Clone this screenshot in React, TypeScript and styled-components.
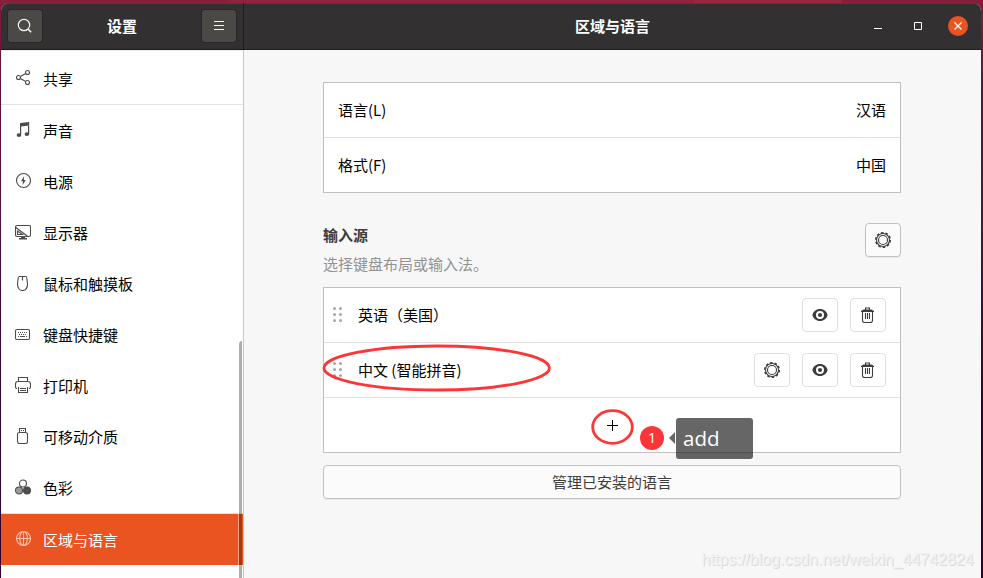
import React from "react";
import styled, { createGlobalStyle, css } from "styled-components";

const GlobalStyle = createGlobalStyle`
  * { box-sizing: border-box; }
  body {
    margin: 0;
    overflow: hidden;
    background: #3c0834;
    font-family: "Noto Sans CJK SC", "Noto Sans", sans-serif;
    font-size: 15px;
    line-height: 22px;
    color: #000;
  }
`;

const Desktop = styled.div`
  position: relative;
  width: 983px;
  height: 578px;
  padding: 3px 2px 0 1px;
  overflow: hidden;
  background:
    linear-gradient(90deg, #86203a 0 227px, #8f233d 227px 694px, #9a2740 694px 842px, #861d3a 842px) 0 0 / 100% 4px no-repeat,
    linear-gradient(180deg, #861b3b 0, #5d1238 90px, #54103c 220px, #350430 400px, #300030 578px);
`;

const Window = styled.div`
  display: flex;
  flex-direction: column;
  height: 575px;
  border-radius: 8px 8px 0 0;
  overflow: hidden;
  background: #f7f7f7;
`;

const HeaderBar = styled.header`
  display: flex;
  flex: none;
  height: 47px;
  background: #323030;
  border-bottom: 1px solid #1d1c1c;
  box-shadow: inset 0 1px #434141;
  color: #fff;
`;

const HeaderSide = styled.div`
  display: flex;
  align-items: center;
  justify-content: space-between;
  width: 243px;
  padding: 0 7px;
  border-right: 1px solid #1f1e1e;
`;

const HeaderMain = styled.div`
  display: grid;
  grid-template-columns: 1fr auto 1fr;
  align-items: center;
  flex: 1;
`;

const Title = styled.h1`
  margin: 0;
  grid-column: 2;
  font-size: 15px;
  line-height: 22px;
  font-weight: 700;
  padding-bottom: 1px;
`;

const HeaderButton = styled.button`
  display: grid;
  place-items: center;
  width: 34px;
  height: 32px;
  padding: 0;
  border: 0;
  border-radius: 3px;
  background: #4a4946;
  box-shadow: 0 0 0 1px #292727;
  color: #f4f4f4;
`;

const WindowControls = styled.div`
  display: flex;
  align-items: center;
  justify-content: flex-end;
  gap: 20px;
  padding-right: 13px;
`;

const Control = styled.span<{ $close?: boolean }>`
  display: grid;
  place-items: center;
  width: 20px;
  height: 20px;
  border-radius: 50%;
  ${(p) => p.$close && css`background: #e95420;`}
`;

const Body = styled.div`
  display: flex;
  flex: 1;
  min-height: 0;
`;

const Sidebar = styled.nav`
  position: relative;
  width: 243px;
  padding-top: 3px;
  flex: none;
  background: #fff;
  border-right: 1px solid #c9c7c6;
  box-shadow: inset 0 1px #ececec;
`;

const NavRow = styled.div<{ $selected?: boolean; $divided?: boolean }>`
  display: flex;
  align-items: center;
  gap: 12px;
  height: ${(p) => (p.$divided ? 52 : 51)}px;
  padding-left: 13px;
  ${(p) => p.$divided && css`border-bottom: 1px solid #e3e3e3;`}
  background: ${(p) => (p.$selected ? "#e95420" : "transparent")};
  color: ${(p) => (p.$selected ? "#fff" : "#000")};

  svg {
    color: ${(p) => (p.$selected ? "#f8c1ab" : "#4b4b4b")};
    margin-top: -2px;
  }
`;

const Scrollbar = styled.div`
  position: absolute;
  top: 291px;
  right: 1px;
  width: 4px;
  height: 240px;
  border-left: 1px solid rgba(255, 255, 255, 0.45);
  border-radius: 3px 0 0 0;
  background: rgba(0, 0, 0, 0.31);
  background-clip: padding-box;
`;

const Content = styled.main`
  display: flex;
  flex-direction: column;
  flex: 1;
  padding: 32px 80px 0 79px;
`;

const Card = styled.section`
  border: 1px solid #c2c0bf;
  background: #fff;
`;

const CardRow = styled.div<{ $tools?: boolean }>`
  display: flex;
  align-items: center;
  justify-content: space-between;
  height: 54px;
  padding: 0 14px;
  & + & {
    height: 55px;
    border-top: 1px solid #e2e2e2;
  }
  ${(p) => p.$tools && css`padding-left: 9px;`}
`;

const SourceName = styled.div`
  display: flex;
  align-items: center;
  gap: 15px;
  svg { margin-top: -1px; color: #a6a6a6; }
`;

const Tools = styled.div`
  display: flex;
  gap: 12px;
`;

const IconButton = styled.button<{ $raised?: boolean }>`
  display: grid;
  place-items: center;
  width: 36px;
  height: 34px;
  padding: 0;
  border: 1px solid ${(p) => (p.$raised ? "#c3c1c0" : "#dfdfdf")};
  border-radius: 4px;
  background: ${(p) => (p.$raised ? "#fbfbfb" : "#fff")};
  color: #3d3d3d;
  ${(p) => p.$raised && css`box-shadow: 0 1px 1px rgba(0, 0, 0, 0.06);`}
`;

const SectionHead = styled.div`
  display: flex;
  justify-content: space-between;
  height: 64px;
  margin-top: 30px;
  padding-bottom: 30px;
`;

const SectionTitle = styled.h2`
  margin: 1px 0 7px;
  font-size: 15px;
  line-height: 22px;
  font-weight: 700;
  color: #3d3d3d;
`;

const Hint = styled.p`
  margin: 0;
  line-height: 22px;
  color: #929292;
`;

const AddRow = styled(CardRow)`
  justify-content: center;
`;

const ManageButton = styled.button`
  height: 34px;
  margin-top: 12px;
  padding: 0;
  border: 1px solid #c3c1c0;
  border-radius: 4px;
  background: #fbfbfb;
  box-shadow: 0 1px 1px rgba(0, 0, 0, 0.06);
  color: #3d3d3d;
  font: inherit;
`;

const Marks = styled.svg`
  position: absolute;
  inset: 0;
  pointer-events: none;
`;

const Badge = styled.div`
  position: absolute;
  left: 640px;
  top: 426px;
  width: 24px;
  height: 24px;
  border-radius: 50%;
  background: #fc3638;
  color: #fff;
  font: 15px/23px "Open Sans", sans-serif;
  text-align: center;
`;

const Callout = styled.div`
  position: absolute;
  left: 676px;
  top: 418px;
  width: 77px;
  height: 41px;
  padding-left: 7px;
  border-radius: 3px;
  background: rgba(0, 0, 0, 0.6);
  color: #fff;
  font: 20.5px/40px "Open Sans", sans-serif;
  &::before {
    content: "";
    position: absolute;
    left: -7px;
    top: 14px;
    border: 6px solid transparent;
    border-left: 0;
    border-right-color: rgba(0, 0, 0, 0.6);
  }
`;

const Watermark = styled.div`
  position: absolute;
  left: 701.5px;
  top: 550px;
  font: 16px/20px "Liberation Sans", sans-serif;
  white-space: nowrap;
  color: #f1f1f1;
  text-shadow: 1px 1px #dadada;
`;

/* `drop` moves the drawing down inside its box by that many pixels. */
const Glyph = ({ children, size = 17, drop = 0 }: { children: React.ReactNode; size?: number; drop?: number }) => (
  <svg width={size} height={size} viewBox={`0 ${-drop} ${size} ${size}`} fill="none" stroke="currentColor" strokeWidth="1.1">
    {children}
  </svg>
);

const ShareIcon = () => (
  <Glyph>
    <circle cx="4.5" cy="8.5" r="2" /><circle cx="13.5" cy="3.5" r="2" /><circle cx="13.5" cy="13.5" r="2" />
    <path d="M6.4 7.5 11.7 4.5M6.4 9.5l5.3 3" />
  </Glyph>
);
const MusicIcon = () => (
  <Glyph drop={0.5}>
    <path d="M6 1.6 15.2.6V4L7.2 5v8.8H6z M14 3h1.2v9.5H14z" fill="currentColor" stroke="none" />
    <ellipse cx="4.9" cy="13.6" rx="2.3" ry="1.9" fill="currentColor" stroke="none" />
    <ellipse cx="12.9" cy="12.6" rx="2.3" ry="1.9" fill="currentColor" stroke="none" />
  </Glyph>
);
const PowerIcon = () => (
  <Glyph>
    <circle cx="9.5" cy="8.5" r="7" />
    <path d="M10.2 4 7 9.2h2l-.5 4 3.2-5.2H9.8z" fill="currentColor" stroke="none" />
  </Glyph>
);
const DisplayIcon = () => (
  <Glyph drop={1}>
    <rect x="1.5" y="1.5" width="15" height="11" rx="1.5" />
    <path d="M1.8 3.5 13.5 12.3M3.5 7v3.5h5z" />
    <path d="M7 12h4v2h2v1.5H5V14h2z" fill="currentColor" stroke="none" />
  </Glyph>
);
const MouseIcon = () => (
  <Glyph drop={1}>
    <path d="M5.2 1.5h6.6q1 0 1.1 2l.6 5.5c0 4-2 6.5-5 6.5s-5-2.5-5-6.5l.6-5.5q.1-2 1.1-2zM8.5 1.5v4" />
  </Glyph>
);
const KeyboardIcon = () => (
  <Glyph drop={1}>
    <rect x="1.5" y="3.5" width="14" height="10" rx="1.5" />
    <path d="M4 6.5h9.5M5 8.5h8" strokeDasharray="1 1" />
    <path d="M4 10.5h1M6 10.5h5M12 10.5h1" />
  </Glyph>
);
const PrinterIcon = () => (
  <Glyph drop={1}>
    <path d="M4.5 4.5v-4h9v4M3 11.5H2.5q-1-.5-1-1.5V7q0-2.5 2.5-2.5h10q2.5 0 2.5 2.5v3q0 1-1 1.5H15M4.5 10v5.5h9V10M6 11.5h6M6 13.5h6" />
  </Glyph>
);
const UsbIcon = () => (
  <Glyph drop={1}>
    <path d="M5.5 4.5v-4h6v4M7 2.5h1M9 2.5h1" />
    <rect x="3.5" y="4.5" width="10" height="11" rx="2" />
  </Glyph>
);
const ColorIcon = () => (
  <Glyph drop={1}>
    <circle cx="9" cy="4.5" r="3.5" />
    <circle cx="13" cy="11.5" r="4" fill="currentColor" stroke="none" />
    <circle cx="5" cy="11.5" r="3.5" fill="#9c9c9c" />
  </Glyph>
);
const GlobeIcon = () => (
  <Glyph>
    <circle cx="9.5" cy="8.5" r="7" />
    <ellipse cx="9.5" cy="8.5" rx="3.8" ry="7" />
    <path d="M2.5 8.5h14M9.5 1.5v14" />
  </Glyph>
);
const GearIcon = () => (
  <Glyph size={18}>
    <circle cx="9" cy="9" r="7.3" strokeWidth="1.5" strokeDasharray="2.6 1.987" />
    <circle cx="9" cy="9" r="6.5" />
    <circle cx="9" cy="9" r="4.5" />
  </Glyph>
);
const EyeIcon = () => (
  <Glyph size={16}>
    <path fillRule="evenodd" stroke="none" fill="currentColor" d="M8 2c4 0 6.7 2.5 7.6 6-.9 3.5-3.6 6-7.6 6S1.3 11.5.4 8C1.3 4.500 4 2 8 2zm0 2a4 4 0 1 0 0 8 4 4 0 0 0 0-8z" />
    <circle cx="8" cy="8" r="2.1" fill="currentColor" stroke="none" />
  </Glyph>
);
const TrashIcon = () => (
  <Glyph size={16}>
    <path d="M5 .5h5v2h1.5l2.5 1.5v1H1V4l2.5-1.5H5zM6 1.5v1h3v-1z" fillRule="evenodd" fill="currentColor" stroke="none" />
    <path d="M2.5 5v8.5q0 2 2 2h6q2 0 2-2V5M5.5 6v6M7.5 6v6M9.5 6v6" />
  </Glyph>
);
const GripIcon = () => (
  <svg width="10" height="16" fill="currentColor">
    {[1.5, 7.5].map((x) => [1.5, 7.5, 13.5].map((y) => <circle key={`${x}-${y}`} cx={x} cy={y} r="1.5" />))}
  </svg>
);

const navItems = [
  { label: "共享", Icon: ShareIcon, divided: true },
  { label: "声音", Icon: MusicIcon },
  { label: "电源", Icon: PowerIcon },
  { label: "显示器", Icon: DisplayIcon },
  { label: "鼠标和触摸板", Icon: MouseIcon },
  { label: "键盘快捷键", Icon: KeyboardIcon },
  { label: "打印机", Icon: PrinterIcon },
  { label: "可移动介质", Icon: UsbIcon },
  { label: "色彩", Icon: ColorIcon, divided: true },
  { label: "区域与语言", Icon: GlobeIcon, selected: true },
];

const sources = [
  { name: "英语（美国）", configurable: false },
  { name: "中文 (智能拼音)", configurable: true },
];

export default function App() {
  return (
    <Desktop>
      <GlobalStyle />
      <Window>
        <HeaderBar>
          <HeaderSide>
            <HeaderButton aria-label="搜索">
              <svg width="16" height="16" fill="none" stroke="currentColor" strokeWidth="1.2">
                <circle cx="7" cy="7" r="5.7" /><path d="m11.2 11.2 3 3" strokeWidth="1.6" />
              </svg>
            </HeaderButton>
            <Title>设置</Title>
            <HeaderButton aria-label="菜单">
              <svg width="10" height="10" stroke="currentColor">
                <path d="M0 .5h10M0 4.5h10M0 8.5h10" />
              </svg>
            </HeaderButton>
          </HeaderSide>
          <HeaderMain>
            <Title>区域与语言</Title>
            <WindowControls>
              <Control><svg width="8" height="8"><path d="M0 6.5h8" stroke="#fff" /></svg></Control>
              <Control><svg width="8" height="8"><path d="M.5.5h7v7h-7z" fill="none" stroke="#fff" /></svg></Control>
              <Control $close><svg width="8" height="8"><path d="m.5.5 7 7m0-7-7 7" stroke="#fff" strokeWidth="1.2" /></svg></Control>
            </WindowControls>
          </HeaderMain>
        </HeaderBar>
        <Body>
          <Sidebar>
            {navItems.map(({ label, Icon, divided, selected }) => (
              <NavRow key={label} $divided={divided} $selected={selected}>
                <Icon />
                <span>{label}</span>
              </NavRow>
            ))}
            <Scrollbar />
          </Sidebar>
          <Content>
            <Card>
              <CardRow><span>语言(L)</span><span>汉语</span></CardRow>
              <CardRow><span>格式(F)</span><span>中国</span></CardRow>
            </Card>
            <SectionHead>
              <div>
                <SectionTitle>输入源</SectionTitle>
                <Hint>选择键盘布局或输入法。</Hint>
              </div>
              <IconButton $raised aria-label="选项"><GearIcon /></IconButton>
            </SectionHead>
            <Card>
              {sources.map((s) => (
                <CardRow key={s.name} $tools>
                  <SourceName><GripIcon />{s.name}</SourceName>
                  <Tools>
                    {s.configurable && <IconButton aria-label="首选项"><GearIcon /></IconButton>}
                    <IconButton aria-label="查看"><EyeIcon /></IconButton>
                    <IconButton aria-label="删除"><TrashIcon /></IconButton>
                  </Tools>
                </CardRow>
              ))}
              <AddRow>
                <svg width="11" height="11" stroke="#000"><path d="M0 5.5h11M5.5 0v11" /></svg>
              </AddRow>
            </Card>
            <ManageButton>管理已安装的语言</ManageButton>
          </Content>
        </Body>
      </Window>
      <Marks width="983" height="578" fill="none" stroke="#fc3638" strokeWidth="2.8">
        <ellipse cx="436.7" cy="368" rx="112.7" ry="22" />
        <ellipse cx="612.5" cy="427" rx="19.8" ry="16.3" />
      </Marks>
      <Badge>1</Badge>
      <Callout>add</Callout>
      <Watermark>https://blog.csdn.net/weixin_44742824</Watermark>
    </Desktop>
  );
}
